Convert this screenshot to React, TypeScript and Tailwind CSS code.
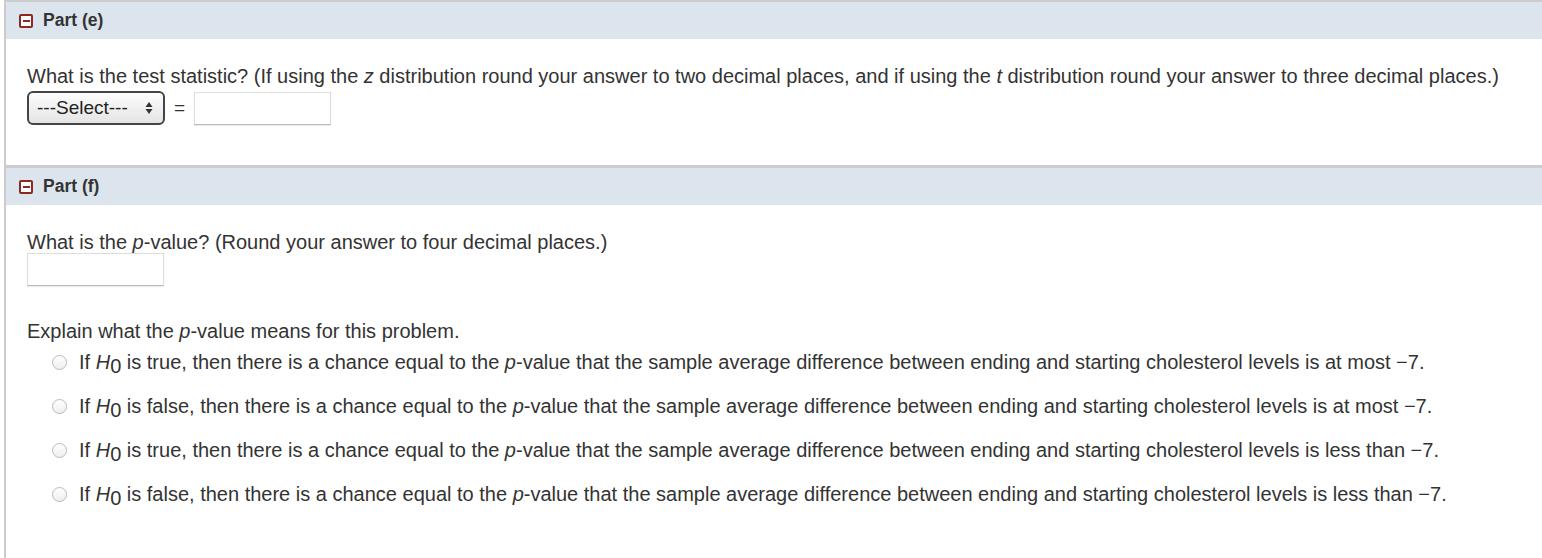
import React from "react";

const Minus = () => (
  <span className="inline-flex items-center justify-center w-[14px] h-[14px] border-2 border-[#8a2b22] rounded-[2px] bg-white mr-[10px]">
    <span className="block w-[7px] h-[2px] bg-[#8a2b22]" />
  </span>
);

const Header = ({ label }: { label: string }) => (
  <div className="h-[37px] bg-[#dce5ed] flex items-center pl-[13px] text-[17.5px] font-bold text-[#333]">
    <Minus />
    <span>{label}</span>
  </div>
);

const H0 = () => (
  <>
    <i>H</i>
    <span className="relative top-[4px]">0</span>
  </>
);

const options = [
  ["true", "is at most −7."],
  ["false", "is at most −7."],
  ["true", "is less than −7."],
  ["false", "is less than −7."],
];

export default function App() {
  return (
    <div
      className="w-[1542px] h-[558px] bg-white text-[#333] overflow-hidden"
      style={{ fontFamily: '"Liberation Sans", Arial, sans-serif' }}
    >
      <div className="ml-[4px] border-l-2 border-t-2 border-[#cccccc] h-full">
        <Header label="Part (e)" />
        <div className="pl-[21px] pt-[26px] h-[126px] text-[20px]">
          <div className="leading-[22px]">
            What is the test statistic? (If using the <i>z</i> distribution round your answer to two decimal places, and if using the <i>t</i> distribution round your answer to three decimal places.)
          </div>
          <div className="flex items-center mt-[4px]">
            <div className="w-[138px] h-[34px] rounded-[6px] border-2 border-[#444] bg-gradient-to-b from-[#fdfdfd] to-[#e4e4e4] flex items-center pl-[8px] pr-[10px] justify-between text-[19px] text-[#222]">
              <span>---Select---</span>
              <svg width="8" height="14" viewBox="0 0 8 14">
                <path d="M4 1 L7.5 6 L0.5 6 Z" fill="#333" />
                <path d="M4 13 L7.5 8 L0.5 8 Z" fill="#333" />
              </svg>
            </div>
            <span className="mx-[9px] text-[19px]">=</span>
            <div className="w-[137px] h-[33px] border border-[#ddd] border-b-[#bbb] shadow-[0_1px_1px_rgba(0,0,0,0.08)]" />
          </div>
        </div>
        <div className="h-[3px] bg-[#cccccc]" />
        <Header label="Part (f)" />
        <div className="pl-[21px] pt-[26px] text-[20px]">
          <div className="leading-[22px]">
            What is the <i>p</i>-value? (Round your answer to four decimal places.)
          </div>
          <div className="w-[137px] h-[33px] border border-[#ddd] border-b-[#bbb] shadow-[0_1px_1px_rgba(0,0,0,0.08)]" />
          <div className="leading-[22px] mt-[34px]">
            Explain what the <i>p</i>-value means for this problem.
          </div>
          <div className="flex flex-col -mt-[2px]">
            {options.map(([tf, end], i) => (
              <div key={i} className="flex items-center h-[44px] pl-[25px]">
                <span className="w-[15px] h-[15px] rounded-full border border-[#bbb] bg-gradient-to-b from-white to-[#eee] mr-[12px] shrink-0" />
                <span className="leading-[22px] whitespace-nowrap">
                  If <H0 /> is {tf}, then there is a chance equal to the <i>p</i>-value that the sample average difference between ending and starting cholesterol levels {end}
                </span>
              </div>
            ))}
          </div>
        </div>
      </div>
    </div>
  );
}
